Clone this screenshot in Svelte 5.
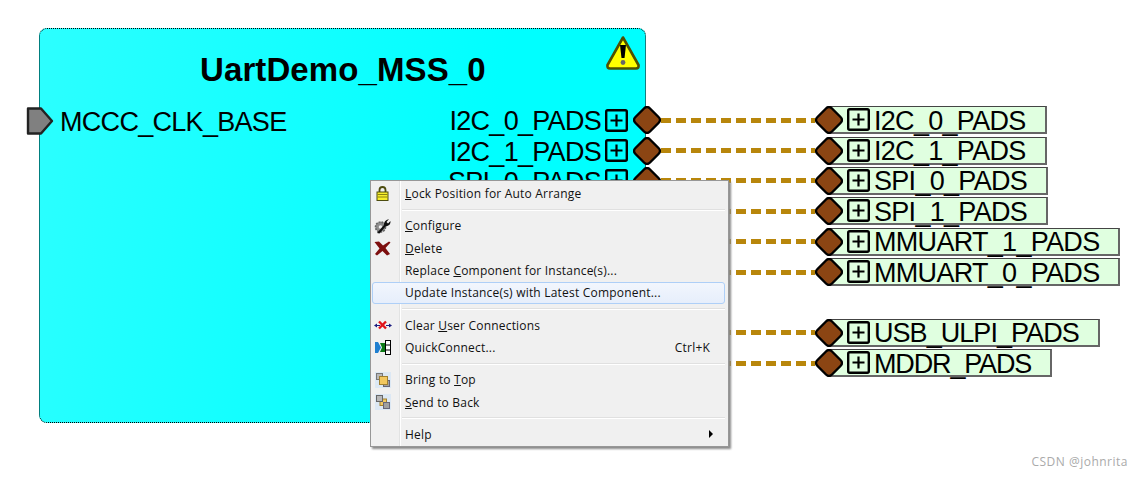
<script>
  const rows = [
    { name: 'I2C_0_PADS' },
    { name: 'I2C_1_PADS' },
    { name: 'SPI_0_PADS' },
    { name: 'SPI_1_PADS' },
    { name: 'MMUART_1_PADS' },
    { name: 'MMUART_0_PADS' },
    null,
    { name: 'USB_ULPI_PADS', track: -0.95 },
    { name: 'MDDR_PADS', track: -1.15 }
  ];
</script>

{#snippet plus()}
  <svg class="plus" width="23" height="23" viewBox="0 0 23 23">
    <rect x="1.2" y="1.2" width="20.6" height="20.6" rx="1.5" fill="none" stroke="#000" stroke-width="2.4" />
    <path d="M5.5 11.5h12M11.5 5.5v12" stroke="#000" stroke-width="2.2" />
  </svg>
{/snippet}

{#snippet diamond()}
  <svg class="diamond" width="28" height="28" viewBox="0 0 28 28">
    <path d="M14 1 Q15.500 1 17 2.500 L25.500 11 Q27 12.500 27 14 Q27 15.500 25.500 17 L17 25.500 Q15.500 27 14 27 Q12.500 27 11 25.500 L2.500 17 Q1 15.500 1 14 Q1 12.500 2.500 11 L11 2.500 Q12.500 1 14 1Z" fill="#8b4513" stroke="#000" stroke-width="2.4" />
  </svg>
{/snippet}

<div class="canvas">
  <div class="block">
    <h1>UartDemo_MSS_0</h1>
    <svg class="warn" width="36" height="36" viewBox="0 0 36 36">
      <path d="M18 2.500 L33.500 30 Q34 33.500 31 33.500 L5 33.500 Q2 33.500 2.500 30Z" fill="#ffff00" stroke="#4f4f00" stroke-width="2.600" stroke-linejoin="round" />
      <path d="M15 10h6l-1.500 13h-3z" fill="#000" />
      <circle cx="18" cy="27.500" r="2.400" fill="#666" />
    </svg>
    <div class="clk">
      <svg width="28" height="28" viewBox="0 0 28 28">
        <path d="M2 1.500H15L26 14 15 26.500H2Z" fill="#808080" stroke="#222" stroke-width="2.400" stroke-linejoin="round" />
      </svg>
      <span class="sig">MCCC_CLK_BASE</span>
    </div>
  </div>

  <div class="net">
    {#each rows as row}
      <div class="row">
        {#if row}
          <div class="inst">
            <span class="sig">{row.name}</span>
            {@render plus()}
            {@render diamond()}
          </div>
          <div class="wire"></div>
          <div class="pad">
            {@render diamond()}
            <div class="pad-box">
              {@render plus()}
              <span class="sig" style:letter-spacing={row.track ? `${row.track}px` : null}>{row.name}</span>
            </div>
          </div>
        {/if}
      </div>
    {/each}
  </div>

  <div class="menu">
    <div class="item">
      <span class="ic">
        <svg width="13" height="15" viewBox="0 0 13 15">
          <path d="M3.500 6V4a3 3 0 0 1 6 0V6" fill="none" stroke="#4d4d10" stroke-width="1.800" />
          <rect x="1" y="6" width="11" height="8.500" fill="#f7ee2a" stroke="#4d4d10" />
          <path d="M1.500 8.500h10M1.500 11h10" stroke="#8a8410" />
        </svg>
      </span>
      <span><u>L</u>ock Position for Auto Arrange</span>
    </div>
    <div class="sep"></div>
    <div class="item">
      <span class="ic">
        <svg width="17" height="16" viewBox="0 0 17 16">
          <circle cx="6.500" cy="9" r="5" fill="#8d8d8d" stroke="#666" stroke-width="1.600" stroke-dasharray="2 1" />
          <circle cx="6.500" cy="9" r="1.800" fill="#efefef" />
          <path d="M3 15 L10 7 Q9.500 2.500 15 1 L12.500 4 14 5.500 16.500 3 Q17 7.500 11.500 8.500 L5.500 15.500Z" fill="#111" />
        </svg>
      </span>
      <span><u>C</u>onfigure</span>
    </div>
    <div class="item">
      <span class="ic">
        <svg width="17" height="15" viewBox="0 0 17 15">
          <path d="M0.500 1 L5 0.500 L9 4.500 L15 0.500 L16.500 1.500 L11.500 7 L16 13 L13 14.500 L8.500 10 L3 14.500 L1 13 L5.500 7.500Z" fill="#7d0f0f" />
        </svg>
      </span>
      <span><u>D</u>elete</span>
    </div>
    <div class="item"><span class="ic"></span><span>Replace <u>C</u>omponent for Instance(s)...</span></div>
    <div class="item hover"><span class="ic"></span><span>Update Instance(s) with Latest Component...</span></div>
    <div class="sep"></div>
    <div class="item">
      <span class="ic">
        <svg width="18" height="10" viewBox="0 0 18 10">
          <path d="M0 5.500l3-2v1.500h3v1H3v1.500zM12 5h3V3.500l3 2-3 2V6h-3z" fill="#1c1c80" />
          <path d="M5 1.500l7 7M12 1.500l-7 7" stroke="#e0141a" stroke-width="2.400" />
        </svg>
      </span>
      <span>Clear <u>U</u>ser Connections</span>
    </div>
    <div class="item">
      <span class="ic">
        <svg width="18" height="15" viewBox="0 0 18 15">
          <path d="M1 2h3l3 5.500-3 5.500H1Z" fill="#1f7fd0" />
          <path d="M6 3h6v9H6l2-4.500Z" fill="#0c7a16" />
          <rect x="11.500" y="0.500" width="5" height="14" fill="#fff" stroke="#000" />
          <path d="M11.500 5h5M11.500 10h5" stroke="#000" />
        </svg>
      </span>
      <span>QuickConnect...</span>
      <span class="accel">Ctrl+K</span>
    </div>
    <div class="sep"></div>
    <div class="item">
      <span class="ic layer">
        <svg width="16" height="16" viewBox="0 0 16 16">
          <rect x="1.500" y="1.500" width="6" height="6" fill="#b8b8b8" stroke="#777" />
          <rect x="8.500" y="8.500" width="6" height="6" fill="#a0a0a0" stroke="#667" />
          <rect x="4.500" y="4.500" width="8" height="8" fill="#f2c860" stroke="#a08030" />
        </svg>
      </span>
      <span>Bring to <u>T</u>op</span>
    </div>
    <div class="item">
      <span class="ic layer">
        <svg width="16" height="16" viewBox="0 0 16 16">
          <rect x="5" y="5" width="6.500" height="6.500" fill="#f2c860" stroke="#a08030" />
          <rect x="1.500" y="1.500" width="6" height="6" fill="#b8b8b8" stroke="#666" />
          <rect x="8.500" y="8.500" width="6" height="6" fill="#a0a0a0" stroke="#667" />
        </svg>
      </span>
      <span><u>S</u>end to Back</span>
    </div>
    <div class="sep"></div>
    <div class="item">
      <span class="ic"></span>
      <span>Help</span>
      <span class="arrow"></span>
    </div>
  </div>

  <div class="mark">CSDN @johnrita</div>
</div>

<style>
  :global(body) {
    background: #fff;
  }

  .canvas {
    position: relative;
    width: 1143px;
    height: 478px;
    overflow: hidden;
    font-family: "Liberation Sans", Arial, sans-serif;
  }

  .block {
    position: absolute;
    left: 39px;
    top: 28px;
    width: 605px;
    height: 393px;
    border: 1px dotted #000;
    border-radius: 8px;
    background: linear-gradient(100deg, #2cffff, #00ffff 70%);
  }

  h1 {
    margin: 0;
    position: absolute;
    left: 160px;
    top: 20px;
    font-size: 33px;
    line-height: 42px;
    font-weight: bold;
    letter-spacing: 0.1px;
    white-space: nowrap;
  }

  .warn {
    position: absolute;
    left: 565px;
    top: 6px;
    filter: blur(0.6px);
  }

  .clk {
    position: absolute;
    left: -14px;
    top: 78px;
    display: flex;
    align-items: center;
    gap: 6px;
  }

  .sig {
    font-size: 27px;
    line-height: 28px;
    letter-spacing: -0.7px;
    color: #000;
    white-space: nowrap;
    position: relative;
    top: 1px;
  }

  .net {
    position: absolute;
    left: 0;
    top: 105px;
    display: flex;
    flex-direction: column;
  }

  .row {
    height: 30.400px;
    display: flex;
    align-items: center;
  }

  .inst {
    width: 661px;
    display: flex;
    align-items: center;
    justify-content: flex-end;
  }

  .inst .plus {
    margin: 0 5px 0 4px;
  }

  .wire {
    width: 154px;
    height: 5px;
    background: repeating-linear-gradient(90deg, #b8860b 0 10px, transparent 10px 15px);
  }

  .pad {
    display: flex;
    align-items: center;
  }

  .pad .diamond {
    position: relative;
    z-index: 1;
  }

  .pad-box {
    display: flex;
    align-items: center;
    gap: 4px;
    height: 25px;
    margin-left: -14px;
    padding: 0 19px 0 17px;
    background: #e0ffe0;
    border: 1px solid #444;
    border-right: 2px solid #666;
    border-bottom: 2px solid #666;
  }

  .menu {
    position: absolute;
    left: 370px;
    top: 180px;
    width: 359px;
    height: 267px;
    box-sizing: border-box;
    padding: 1.500px 2px 2px 1px;
    display: flex;
    flex-direction: column;
    background: linear-gradient(90deg, #f0f0f0 28px, #e2e3e3 28px 29px, #fff 29px 30px, #f0f0f0 30px);
    border: 1px solid #979797;
    box-shadow: 2px 2px 2px #8a8a8a;
    font-family: "Open Sans", "Noto Sans", sans-serif;
    font-size: 12px;
    letter-spacing: 0.2px;
    color: #111;
  }

  .item {
    flex: 0 0 22.300px;
    display: flex;
    align-items: center;
    box-sizing: border-box;
    padding-right: 18px;
    white-space: nowrap;
  }

  .hover {
    background: linear-gradient(#f2f6fd, #e6eefb);
    border: 1px solid #aecff7;
    border-radius: 3px;
    margin-right: 1px;
  }

  .ic {
    flex: 0 0 33px;
    display: flex;
    justify-content: center;
    align-items: center;
    padding-right: 12px;
    box-sizing: border-box;
  }

  .hover .ic {
    flex-basis: 32px;
  }

  .layer svg {
    background: #dce8f4;
  }

  .sep {
    flex: 0 0 10px;
    margin: 0 1px 0 30px;
    background: linear-gradient(transparent 4px, #e0e0e0 4px 5px, #fff 5px 6px, transparent 6px);
  }

  .accel {
    margin-left: auto;
    margin-right: -2px;
  }

  .arrow {
    margin-left: auto;
    margin-right: -5px;
    border-left: 4px solid #000;
    border-top: 4px solid transparent;
    border-bottom: 4px solid transparent;
  }

  .mark {
    position: absolute;
    right: 15px;
    top: 453px;
    font-size: 12px;
    letter-spacing: 0.5px;
    color: #aaa;
    font-family: "Open Sans", sans-serif;
  }
</style>
